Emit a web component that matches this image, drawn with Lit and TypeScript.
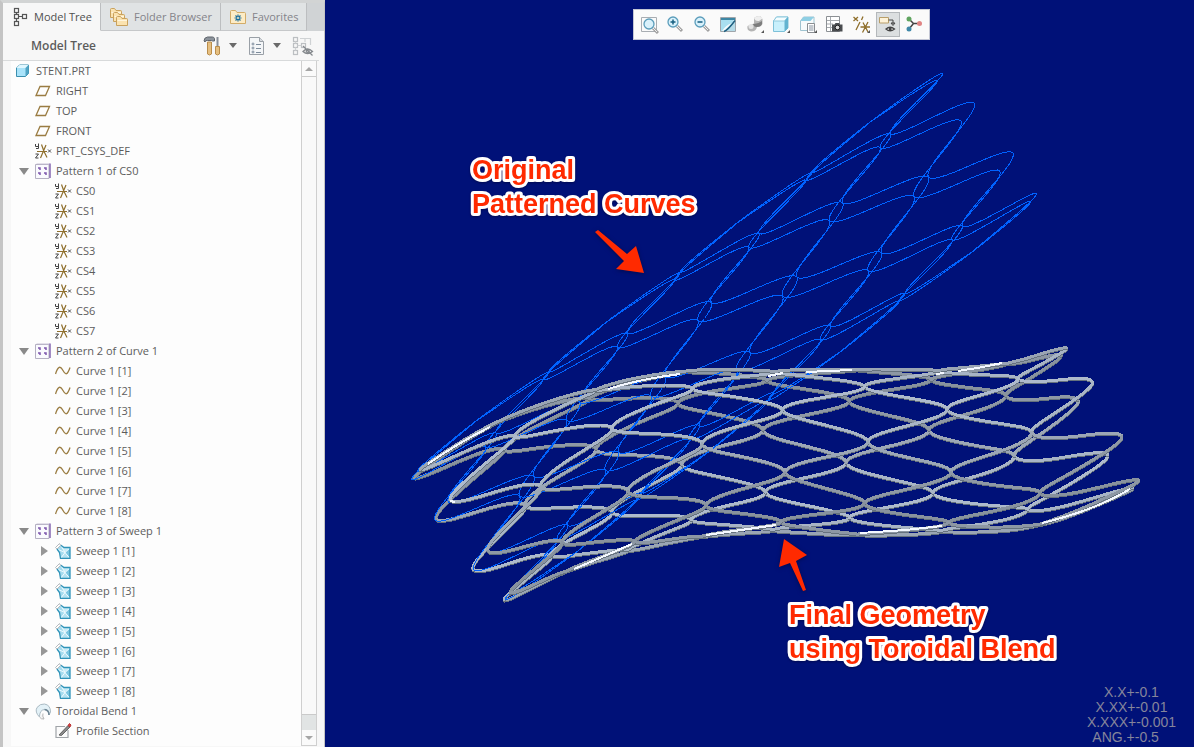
import { LitElement, html, svg, css, nothing, type TemplateResult } from "lit";
import { customElement, state } from "lit/decorators.js";
import { classMap } from "lit/directives/class-map.js";

type Pt = [number, number];
type Station = { c: Pt; a: Pt; b: Pt };

/* ---------- stent geometry ---------- */

const RINGS = 8;
const STRUTS = 16;

/* Cross-section frames along the axis, from the right end to the left end. */
const BENT: Station[] = [
  { c: [1100, 418], a: [-33, -70], b: [22, 18] },
  { c: [1023, 444], a: [-11, -79], b: [14, 20] },
  { c: [940, 451], a: [-1, -80], b: [11, 21] },
  { c: [857, 452], a: [4, -80], b: [10, 22] },
  { c: [774, 451], a: [1, -79], b: [11, 21] },
  { c: [692, 454], a: [-5, -80], b: [13, 22] },
  { c: [612, 470], a: [-16, -80], b: [16, 21] },
  { c: [533, 496], a: [-28, -73], b: [20, 20] },
  { c: [462, 535], a: [-42, -65], b: [26, 16] },
];

const STRAIGHT: Station[] = BENT.map((_, i) => ({
  c: [987 - (526 * i) / 8, 137 + (399 * i) / 8] as Pt,
  a: [-44, -64] as Pt,
  b: [26, 16] as Pt,
}));

const spline = (p0: number, p1: number, p2: number, p3: number, f: number) =>
  0.5 *
  (2 * p1 + (p2 - p0) * f + (2 * p0 - 5 * p1 + 4 * p2 - p3) * f * f + (3 * p1 - p0 - 3 * p2 + p3) * f * f * f);

function sample(st: Station[], pos: number, theta: number): Pt {
  const i = Math.min(7, Math.max(0, Math.floor(pos)));
  const f = pos - i;
  const get = (n: number, key: "c" | "a" | "b", d: number): number => {
    if (n < 0) return 2 * st[0][key][d] - st[1][key][d];
    if (n > 8) return 2 * st[8][key][d] - st[7][key][d];
    return st[n][key][d];
  };
  const val = (key: "c" | "a" | "b", d: number) =>
    spline(get(i - 1, key, d), get(i, key, d), get(i + 1, key, d), get(i + 2, key, d), f);
  return [0, 1].map((d) => val("c", d) + val("a", d) * Math.cos(theta) + val("b", d) * Math.sin(theta)) as Pt;
}

function strut(st: Station[], ring: number, k: number): string {
  const steps = 14;
  const pts: string[] = [];
  for (let n = 0; n <= steps; n++) {
    const theta = ((k + n / steps) * 2 * Math.PI) / STRUTS;
    const sign = ring % 2 === 0 ? 1 : -1;
    const pos = ring + 0.5 - (sign * Math.cos(8 * theta)) / 2;
    const [x, y] = sample(st, pos, theta);
    pts.push(`${x.toFixed(1)} ${y.toFixed(1)}`);
  }
  return "M" + pts.join("L");
}

const midAngle = (k: number) => ((k + 0.5) * 360) / STRUTS;
const isFront = (k: number) => Math.sin(((midAngle(k) + 20) * Math.PI) / 180) > 0;

function steelTone(k: number): string {
  const f = (Math.cos((2 * (midAngle(k) - 35) * Math.PI) / 180) + 1) / 2;
  const mix = (lo: number, hi: number) => Math.round(lo + (hi - lo) * f);
  return `rgb(${mix(136, 174)},${mix(146, 186)},${mix(158, 204)})`;
}

function steel(front: boolean): TemplateResult[] {
  const out: TemplateResult[] = [];
  for (let ring = 0; ring < RINGS; ring++) {
    for (let k = 0; k < STRUTS; k++) {
      if (isFront(k) !== front) continue;
      const d = strut(BENT, ring, k);
      out.push(svg`<path class="steel-shade" d=${d} transform="translate(0 1)"/>
        <path class="steel" d=${d} stroke=${steelTone(k)}/>`);
    }
  }
  return out;
}

const wire = Array.from({ length: RINGS }, (_, r) =>
  Array.from({ length: STRUTS }, (_, k) => strut(STRAIGHT, r, k)).join("")
).join("");

const GLINTS = [
  "M428 464Q456 444 490 427",
  "M608 389Q640 379 680 374",
  "M768 376L783 373",
  "M806 372L852 370",
  "M936 374L944 373M958 371Q980 368 1002 363",
  "M574 569Q600 558 632 544",
  "M706 535L776 525",
  "M860 533L906 530L942 526",
  "M1042 523Q1096 510 1130 489",
  "M450 501L455 502",
];

/* ---------- icons ---------- */

const icon = (w: number, h: number, body: TemplateResult) =>
  html`<svg class="ico" width=${w} height=${h} viewBox="0 0 ${w} ${h}" aria-hidden="true">${body}</svg>`;

const treeGlyph = svg`<g fill="none" stroke="#555" stroke-width="1.2">
  <rect x="1.5" y="1.5" width="4" height="4"/><rect x="1.5" y="7.5" width="4" height="4"/><rect x="1.5" y="14.5" width="4" height="4"/>
  <rect x="9.5" y="7.5" width="4" height="4"/><path d="M3.5 5.500V7.500M3.500 11.500V14.500M5.500 9.500H9.500"/></g>`;

const folderShape = (x: number, y: number) => svg`<path transform="translate(${x} ${y})" d="M.5 9.500V1.500Q.5.5 1.500.5H4.500L6 2.500H10.500Q11.500 2.500 11.500 3.500V9.500Z" fill="#fbe3b0" stroke="#c9a25e"/>
  <path transform="translate(${x} ${y})" d="M1.500 4H11V5H1.500Z" fill="#fff6df"/>`;

const I: Record<string, TemplateResult> = {
  model: icon(16, 20, treeGlyph),
  folders: icon(20, 20, svg`${folderShape(1, 1)}${folderShape(4, 5)}${folderShape(7, 9)}`),
  favorite: icon(18, 16, svg`<path d="M1.500 14.500V2.500Q1.500 1.500 2.500 1.500H6.500L8 3.500H15.500Q16.500 3.500 16.500 4.500V14.500Z" fill="#fdecc6" stroke="#d3ac68"/>
    <path d="M9 5.500V12.500M5.500 9H12.500M6.500 6.500L11.500 11.500M11.500 6.500L6.500 11.500" stroke="#1d6f9c" stroke-width="1.200"/><circle cx="9" cy="9" r="1" fill="#fdecc6"/>`),
  tools: icon(18, 20, svg`<path d="M4.500 6H8.500V18Q6.500 20 4.500 18Z" fill="#e6bf80" stroke="#b98d4c"/>
    <path d="M1 5Q1 1.500 4.500 1H9.500Q11 1 11.500 2.500V5H9.500L8.500 4.500H4.500Q2.500 4 2 6Z" fill="#8c939b" stroke="#5f656d"/>
    <path d="M14.500 1V10" stroke="#888f99" stroke-width="2"/><path d="M12.500 10.500H16.500V18Q14.500 20 12.500 18Z" fill="#e6bf80" stroke="#b98d4c"/>`),
  list: icon(17, 20, svg`<path d="M1.500 1.500H11.500L15.500 5.500V18.500H1.500Z" fill="#f4f6f8" stroke="#9aa0a7"/><path d="M11.500 1.500V5.500H15.500" fill="#d7dbe0" stroke="#9aa0a7"/>
    <g fill="none" stroke="#7d8c9c"><circle cx="5" cy="8" r="1"/><circle cx="5" cy="12" r="1"/><circle cx="5" cy="16" r="1"/><path d="M8 8.500H13M8 12.500H13M8 16.500H13"/></g>`),
  filter: icon(22, 20, svg`<g fill="none" stroke="#bcbfc2" stroke-width="1.200"><rect x="1.500" y="1.500" width="4" height="4"/><rect x="1.500" y="7.500" width="4" height="4"/><rect x="1.500" y="14.500" width="4" height="4"/><rect x="9.500" y="7.500" width="4" height="4"/><path d="M3.500 5.500V7.500M3.500 11.500V14.500M5.500 9.500H9.500M8 2.500H18.500V9M13 2.500V6" stroke="#cfd2d4"/></g>
    <g fill="none" stroke="#85898d" stroke-width="1.300"><path d="M11 15.500Q15.500 10.500 20.500 15.500Q15.500 19.500 11 15.500Z"/><circle cx="15.700" cy="15" r="1.500"/><path d="M11 10L20.500 19.500"/></g>`),
  part: icon(16, 16, svg`<path d="M1.500 5L4.500 2H13.500V10.500L10.500 13.500H1.500Z" fill="#a9e3fa" stroke="#3b8fae"/><path d="M1.500 5L4.500 2H13.500L10.500 5Z" fill="#e0f7ff"/><path d="M10.500 5L13.500 2V10.500L10.500 13.500Z" fill="#4fa4c4"/>`),
  plane: icon(16, 16, svg`<path d="M5 3.500H14.500L10.500 12.500H1Z" fill="none" stroke="#9a7c42" stroke-width="1.300"/>`),
  csys: icon(17, 16, svg`<path d="M2 8.500H12M6.500 1.500L9 8.500L12 14.500M11 2L5.500 15" fill="none" stroke="#8f6f2c" stroke-width="1.200"/>
    <path d="M.5 1V3.500H3M3.500.5V5.500H1M.5 11H3.500L.5 15H3.500M13 6.500L16 9.500M16 6.500L13 9.500" fill="none" stroke="#444"/>`),
  pattern: icon(17, 16, svg`<path d="M.5 1.500H14V15.500H.5Z" fill="#fafafe" stroke="#b4b0c2"/><path d="M1 1L2 .5H15L14 1.500Z" fill="#c9c3d8"/><path d="M15 .5V15" stroke="#8566b0" stroke-width="1.500"/>
    <path d="M3 5H5V7M9 5H11V7M3 10H5V12M9 10H11V12" stroke="#7d57ad" stroke-width="1.500" fill="none"/>`),
  curve: icon(16, 16, svg`<path d="M.5 11C3 3 5.500 2.500 8 7.500S12.500 12 15 4.500" fill="none" stroke="#9a7c42" stroke-width="1.300"/>`),
  sweep: icon(17, 16, svg`<path d="M2 6L5.500 2L9 4.500L15 5V15.500H5.500L4.500 9.500Z" fill="#a5dcef"/><path d="M5.500 2L9 4.500L15 5L10 9.500Z" fill="#c9ecf7"/><path d="M10 9.500L15 5V15.500Z" fill="#7cc6e0"/><path d="M10 9.500L15 15.500H5.500Z" fill="#b5e2f1"/>
    <path d="M2 6L10 9.500L5.500 15.500M10 9.500L15 15.500M10 9.500L5.500 2M10 9.500L15 5" stroke="#eefaff" fill="none"/><path d="M5.500 2L9 4.500H15V15.500H5.500L4.500 9.500L2 6" stroke="#2f93b8" stroke-width="1.300" fill="none"/>
    <path d="M.5 4.500L4.500 .5L5.500 2.500L2 6Z" fill="#fff" stroke="#b4b9bd"/>`),
  bend: icon(17, 17, svg`<path d="M4.500 14Q-.5 9 2 4.500Q5 .5 9.500 1Q15.500 2 15.500 9L14 12Q14 7 9.500 6.500Q4.500 7 4.500 14Z" fill="#e3f1f7" stroke="#aabac3"/><path d="M4.500 14Q6 16.500 9 16Q7 13 8 10.500" fill="#f4f4f4" stroke="#b5b5b5"/><path d="M9.500 6.500Q14 7 14 12" stroke="#6d8594" stroke-width="1.500" fill="none"/>`),
  section: icon(17, 16, svg`<path d="M10 3.500H1V14.500H13V7" fill="#fbfbfb" stroke="#a0a4a8" stroke-width="1.200"/><path d="M4 12L13 2.500L15 4L6.500 12.500Z" fill="#8a8a8a" stroke="#666"/><path d="M13 2.500L14.500.5L16 2L15 4Z" fill="#d44" stroke="#b33"/>`),
};

const lens = (x: number, y: number, sign: TemplateResult | typeof nothing) => svg`
  <path d="M${x + 4} ${y + 4}L${x + 9} ${y + 9}" stroke="#a2a2a2" stroke-width="3"/>
  <path d="M${x + 4} ${y + 4}L${x + 8} ${y + 8}" stroke="#eee"/>
  <circle cx=${x} cy=${y} r="5" fill="#d9f1fb" stroke="#5b9dbb" stroke-width="1.300"/>${sign}`;

const corner = svg`<path d="M18 15V18H15Z" fill="#555"/>`;

const VIEW_TOOLS: { label: string; art: TemplateResult; on?: boolean }[] = [
  { label: "Refit", art: svg`<path d="M1.500 2.500H16.500V16.500H1.500Z" fill="#fafafa" stroke="#a8adb2"/>${lens(9, 9, nothing)}` },
  { label: "Zoom in", art: lens(7, 7, svg`<path d="M4.500 7H9.500M7 4.500V9.500" stroke="#155d80" stroke-width="1.500"/>`) },
  { label: "Zoom out", art: lens(7, 7, svg`<path d="M4.500 7H9.500" stroke="#155d80" stroke-width="1.500"/>`) },
  { label: "Repaint", art: svg`<path d="M1.500 2.500H16.500V16.500H1.500Z" fill="#f5fbfd" stroke="#a0a6ab"/><path d="M2 3H16L13 8Q7 10 3 16H2Z" fill="#a9dff0"/><path d="M2 3H16V5H2Z" fill="#3d87a5"/><path d="M5 16Q8 13.500 16 5V16Z" fill="#b5dbe8"/><path d="M5 16.500Q9 15 16 5.500" fill="none" stroke="#1c5f80" stroke-width="1.500"/>` },
  { label: "Rendering options", art: svg`<path d="M8 3Q10 1 14 1L16.500 4V9Q15 12 11 12Q10 16.500 5 16.500Q.5 15.500 1.500 11L8 8.500Z" fill="#b4b4b4"/><path d="M8 3Q9 6.500 13 6L16.500 3.500L13.500 1Q10 1 8 3Z" fill="#efefef"/><path d="M7 9Q11 9.500 16 6V9Q15 12 11 12Q8 12.500 7 9Z" fill="#7c7c7c"/><circle cx="5" cy="11.500" r="2.500" fill="#e2e2e2"/>${corner}` },
  { label: "Display style", art: svg`<path d="M1.500 6L4.500 2H16V13L12.500 16.500H1.500Z" fill="#c8f0fc" stroke="#7dc0d8"/><path d="M1.500 6L4.500 2H16L12.500 6Z" fill="#f4fdff" stroke="#8fc9dd"/><path d="M12.500 6L16 2V13L12.500 16.500Z" fill="#62b3d0"/>${corner}` },
  { label: "Saved orientations", art: svg`<path d="M1.500 6L4.500 2H15V13L11.500 15.500H1.500Z" fill="#f7fbfc" stroke="#9fc3d0"/><path d="M1.500 6L4.500 2H15L11.500 6Z" fill="#8fcfe4"/><path d="M8.500 8.500H15.500V17.500H8.500Z" fill="#fff" stroke="#8a8e92"/><path d="M10 11H14.500M10 13H14.500M10 15H14.500" stroke="#8793a0"/>${corner}` },
  { label: "View manager", art: svg`<path d="M1.500 1.500H14.500V16.500H1.500Z" fill="#fff" stroke="#8c9094"/><path d="M2 5.500H14M2 9H8M2 12.500H8M5.500 2V16" stroke="#a5a9ad"/><path d="M7 9.500H9.500L10.500 8H14L15 9.500H17.500V16.500H7Z" fill="#4a4d50"/><circle cx="12.500" cy="12.500" r="2.300" fill="#ddd" stroke="#222"/>` },
  { label: "Datum display filters", art: svg`<path d="M1.500 2L6 6M6 2L1.500 6M11 1.500L9.500 5M8 7L4 15M8.500 12H18M11 7.500L16 17M16 7L10.500 17.500" fill="none" stroke="#8f6f2c" stroke-width="1.300"/>${corner}` },
  { label: "Annotation display", on: true, art: svg`<path d="M1.500 2.500H10.500V8H1.500Z" fill="#fdf2d8" stroke="#b99f6a"/><path d="M10.500 5H15V9M13 8L15 10.500L17 8Z" stroke="#444" fill="none"/><path d="M8 14Q12 10.500 16.500 14Q12 17.500 8 14Z" fill="#fff" stroke="#444" stroke-width="1.300"/><circle cx="12.200" cy="14" r="1.500" fill="#444"/>` },
  { label: "Spin center", art: svg`<path d="M4 4L8.500 8.500H14M8.500 8.500L4 14" stroke="#444" stroke-width="1.500" fill="none"/><circle cx="4" cy="4" r="2.500" fill="#5fa45f"/><circle cx="4" cy="14" r="2.500" fill="#3f88a8"/><circle cx="14.500" cy="8.500" r="2.500" fill="#e08484"/>` },
];

/* ---------- tree data ---------- */

type Item = { label: string; icon: string; kids?: Item[] };

const series = (n: number, make: (i: number) => Item) => Array.from({ length: n }, (_, i) => make(i));

const TREE: Item[] = [
  { label: "RIGHT", icon: "plane" },
  { label: "TOP", icon: "plane" },
  { label: "FRONT", icon: "plane" },
  { label: "PRT_CSYS_DEF", icon: "csys" },
  { label: "Pattern 1 of CS0", icon: "pattern", kids: series(8, (i) => ({ label: `CS${i}`, icon: "csys" })) },
  { label: "Pattern 2 of Curve 1", icon: "pattern", kids: series(8, (i) => ({ label: `Curve 1 [${i + 1}]`, icon: "curve" })) },
  { label: "Pattern 3 of Sweep 1", icon: "pattern", kids: series(8, (i) => ({ label: `Sweep 1 [${i + 1}]`, icon: "sweep", kids: [] })) },
  { label: "Toroidal Bend 1", icon: "bend", kids: [{ label: "Profile Section", icon: "section" }] },
];

/* ---------- model tree panel ---------- */

@customElement("model-tree")
export class ModelTree extends LitElement {
  @state() private closed = new Set<string>();

  static styles = css`
    :host { display: flex; flex-direction: column; background: #f7f7f7; color: #5c5c5c; font: 11px/20px "Open Sans", "Noto Sans", sans-serif; min-height: 0; }
    button { font: inherit; color: inherit; border: 0; background: none; padding: 0; margin: 0; display: flex; align-items: center; cursor: pointer; }
    .ico { display: block; flex: none; }
    .tabs { display: flex; height: 28px; background: #d0d3d5; }
    .tab { background: #e0e3e4; color: #84848a; gap: 5px; padding: 0 8px; border-right: 1px solid #bcbec0; border-bottom: 1px solid #c6c8ca; white-space: nowrap; }
    .tab.on { background: #f7f7f7; color: #505050; border-bottom-color: #f7f7f7; padding-left: 10px; }
    .head { display: flex; align-items: center; height: 29px; padding: 0 5px 0 28px; border-bottom: 1px solid #d8dadb; margin-right: 5px; }
    h2 { font-size: 12px; font-weight: 600; margin: 0; flex: 1; }
    .tools { display: flex; align-items: center; gap: 8px; }
    .caret { border: 4px solid transparent; border-top: 5px solid #6a6a6a; border-bottom: 0; margin-right: 3px; }
    .body { flex: 1; min-height: 0; display: flex; margin: 0 7px 1px 8px; background: #fdfdfd; }
    .tree { flex: 1; overflow: hidden; }
    ul { list-style: none; margin: 0; padding: 0; }
    .kids { padding-left: 20px; }
    .row { display: flex; align-items: center; height: 20px; padding-left: 4px; }
    .slot { width: 20px; flex: none; display: flex; justify-content: center; }
    .pic { width: 21px; flex: none; display: flex; align-items: center; }
    .down { border: 5px solid transparent; border-top: 7px solid #8a8a8a; border-bottom: 0; margin-right: 3px; }
    .side { border: 4px solid transparent; border-left: 7px solid #979797; border-right: 0; border-top-width: 5px; border-bottom-width: 5px; margin-right: 2px; }
    .bar { width: 14px; display: flex; flex-direction: column; background: #e1e4e4; border: 1px solid #cfcfcf; border-top: 0; }
    .bar button { height: 15px; justify-content: center; background: #fafafa; }
    .thumb { flex: 1; background: #f9f9f9; border: solid #cacaca; border-width: 1px 0; }
    .gap { height: 15px; }
    .up-arrow { border: 4px solid transparent; border-bottom: 4px solid #a5a5a5; border-top: 0; }
    .down-arrow { border: 4px solid transparent; border-top: 4px solid #a5a5a5; border-bottom: 0; }
  `;

  private toggle(label: string) {
    const next = new Set(this.closed);
    next.has(label) ? next.delete(label) : next.add(label);
    this.closed = next;
  }

  private item(it: Item): TemplateResult {
    const open = !!it.kids?.length && !this.closed.has(it.label);
    return html`<li role="treeitem">
      <div class="row">
        <span class="slot">${it.kids
          ? html`<button aria-label="Toggle ${it.label}" @click=${() => this.toggle(it.label)}><span class=${open ? "down" : "side"}></span></button>`
          : nothing}</span>
        <span class="pic">${I[it.icon]}</span><span>${it.label}</span>
      </div>
      ${open ? html`<ul class="kids" role="group">${it.kids!.map((k) => this.item(k))}</ul>` : nothing}
    </li>`;
  }

  render() {
    return html`
      <div class="tabs" role="tablist">
        <button class="tab on" role="tab" aria-selected="true">${I.model}<span>Model Tree</span></button>
        <button class="tab" role="tab">${I.folders}<span>Folder Browser</span></button>
        <button class="tab" role="tab">${I.favorite}<span>Favorites</span></button>
      </div>
      <div class="head">
        <h2>Model Tree</h2>
        <div class="tools">
          <button aria-label="Settings">${I.tools}</button>
          <button aria-label="Settings menu"><span class="caret"></span></button>
          <button aria-label="Show">${I.list}</button>
          <button aria-label="Show menu"><span class="caret"></span></button>
          <button aria-label="Hide features">${I.filter}</button>
        </div>
      </div>
      <div class="body">
        <ul class="tree" role="tree">
          <li role="treeitem">
            <div class="row"><span class="pic">${I.part}</span><span>STENT.PRT</span></div>
            <ul role="group">${TREE.map((t) => this.item(t))}</ul>
          </li>
        </ul>
        <div class="bar">
          <button aria-label="Scroll up"><span class="up-arrow"></span></button>
          <div class="thumb"></div>
          <div class="gap"></div>
          <button aria-label="Scroll down"><span class="down-arrow"></span></button>
        </div>
      </div>`;
  }
}

/* ---------- graphics area ---------- */

@customElement("model-view")
export class ModelView extends LitElement {
  static styles = css`
    :host { display: block; position: relative; overflow: hidden; background: #001178; }
    .scene { display: block; width: 100%; height: 100%; }
    .wire { fill: none; stroke: #0062ff; stroke-width: 1; shape-rendering: crispEdges; }
    .steel, .steel-shade { fill: none; stroke-width: 3; stroke-linecap: round; stroke-linejoin: round; shape-rendering: crispEdges; }
    .steel-shade { stroke: #66727e; }
    .glint { fill: none; stroke: #f4f8ff; stroke-width: 2; shape-rendering: crispEdges; }
    .arrow { fill: #ff2a00; filter: drop-shadow(0 1px 2px #000a50); }
    .note { font: bold 27px "Liberation Sans", Arial, sans-serif; fill: #ff2a00; stroke: #fff; stroke-width: 6px; stroke-linejoin: round; paint-order: stroke; filter: drop-shadow(0 1px 1px #000a50); }
    .toolbar { position: absolute; top: 9px; left: 308px; width: 289px; display: flex; align-items: center; justify-content: space-between; background: #fafafa; border: 1px solid #c3c6d4; padding: 2px 3px; }
    .tool { width: 24px; height: 25px; padding: 0; border: 1px solid transparent; background: none; display: grid; place-items: center; }
    .tool.on { background: #dcdfe0; border-color: #b4b8bb; }
    .ico { display: block; }
    .tol { position: absolute; right: 18px; bottom: 2px; font: 14px/15px "Liberation Sans", Arial, sans-serif; color: #85859b; text-align: center; white-space: pre; }
  `;

  render() {
    return html`
      <svg class="scene" viewBox="325 0 869 747" preserveAspectRatio="xMinYMin meet" role="img" aria-label="Stent curves and bent geometry">
        ${steel(false)}
        <path class="wire" d=${wire}></path>
        ${steel(true)}
        ${GLINTS.map((d) => svg`<path class="glint" d=${d}/>`)}
        <path class="arrow" d="M595 232L598 230L627 254L636 246L644 273L616 269L624 261Z"></path>
        <path class="arrow" d="M784 539L807 555L796 561L806 590L803 591L790 563L779 567Z"></path>
        <text class="note"><tspan x="472" y="179">Original</tspan><tspan x="472" y="213">Patterned Curves</tspan></text>
        <text class="note"><tspan x="789" y="624">Final Geometry</tspan><tspan x="789" y="658">using Toroidal Blend</tspan></text>
      </svg>
      <div class="toolbar" role="toolbar" aria-label="View">
        ${VIEW_TOOLS.map(
          (t) => html`<button class=${classMap({ tool: true, on: !!t.on })} aria-label=${t.label}>${icon(19, 19, t.art)}</button>`
        )}
      </div>
      <div class="tol">X.X+-0.1
X.XX+-0.01
X.XXX+-0.001
ANG.+-0.5   </div>`;
  }
}

@customElement("app-root")
export class AppRoot extends LitElement {
  static styles = css`
    :host { display: grid; grid-template-columns: 325px minmax(0, 1fr); height: 100vh; overflow: hidden; }
    .side { border: solid #c4c4c4; border-width: 3px 1px 0 3px; border-top-color: #d2d4d4; }
  `;
  render() {
    return html`<model-tree class="side"></model-tree><model-view></model-view>`;
  }
}
